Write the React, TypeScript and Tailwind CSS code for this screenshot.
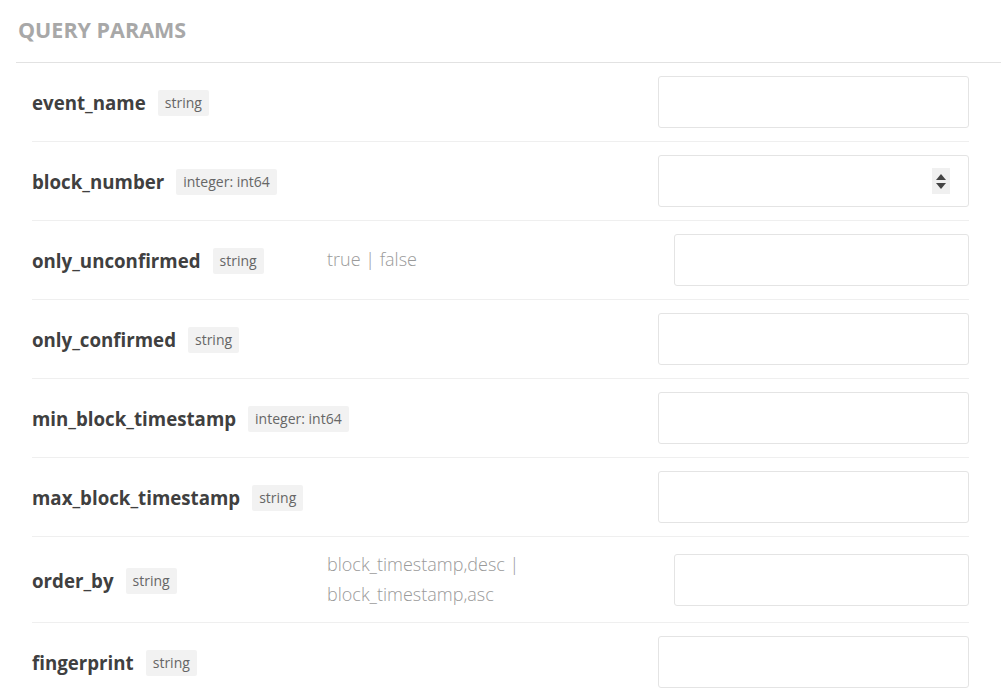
import React from "react";

type Row = { name: string; type: string; desc?: string[]; number?: boolean };

const rows: Row[] = [
  { name: "event_name", type: "string" },
  { name: "block_number", type: "integer: int64", number: true },
  { name: "only_unconfirmed", type: "string", desc: ["true | false"] },
  { name: "only_confirmed", type: "string" },
  { name: "min_block_timestamp", type: "integer: int64" },
  { name: "max_block_timestamp", type: "string" },
  { name: "order_by", type: "string", desc: ["block_timestamp,desc |", "block_timestamp,asc"] },
  { name: "fingerprint", type: "string" },
];

function Spinner() {
  return (
    <div className="flex h-[26px] w-[18px] flex-col items-center justify-center gap-[3px] bg-[#f0f0f0]">
      <svg width="10" height="6" viewBox="0 0 10 6">
        <path d="M5 0 L10 6 L0 6 Z" fill="#444" />
      </svg>
      <svg width="10" height="6" viewBox="0 0 10 6">
        <path d="M0 0 L10 0 L5 6 Z" fill="#444" />
      </svg>
    </div>
  );
}

export default function App() {
  return (
    <div
      className="min-h-[700px] w-[1001px] bg-white pl-4"
      style={{ fontFamily: '"Open Sans", "Liberation Sans", sans-serif' }}
    >
      <div className="flex h-[63px] items-start border-b border-[#e2e2e2] pl-[2px] pt-[15px]">
        <h2 className="text-[21.5px] font-bold leading-[30px] text-[#a8a8a8]">QUERY PARAMS</h2>
      </div>
      <div className="ml-4 w-[937px]">
        {rows.map((r) => (
          <div
            key={r.name}
            className="flex items-center border-b border-[#efefef] py-[13px] last:border-b-0"
          >
            <div className="flex w-[295px] shrink-0 items-center whitespace-nowrap pt-[2px]">
              <span className="text-[18.7px] font-bold leading-[26px] text-[#404040]">{r.name}</span>
              <span className="ml-3 rounded-[2px] bg-[#f2f2f2] px-[7px] text-[14px] leading-[26px] text-[#666]">
                {r.type}
              </span>
            </div>
            <div className="flex-1 text-[18px] font-light leading-[29.5px] text-[#9a9a9a]">
              {r.desc?.map((d) => (
                <div key={d}>{d}</div>
              ))}
            </div>
            <div
              className={`flex h-[52px] shrink-0 items-center justify-end rounded-[3px] border border-[#e4e4e4] pr-[18px] ${
                r.desc ? "w-[295px]" : "w-[311px]"
              }`}
            >
              {r.number && <Spinner />}
            </div>
          </div>
        ))}
      </div>
    </div>
  );
}
